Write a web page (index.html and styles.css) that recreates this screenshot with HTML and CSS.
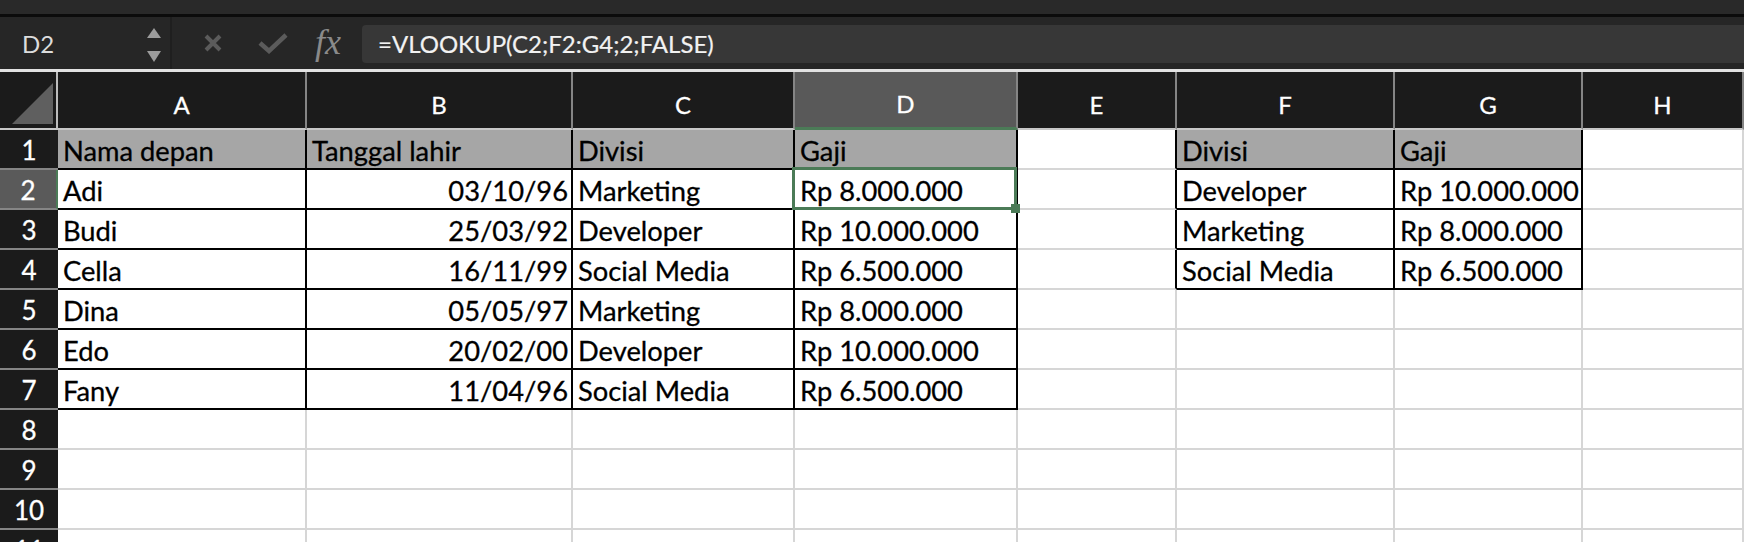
FILE: index.html
```html
<!DOCTYPE html>
<html lang="id">

<head>
  <meta charset="UTF-8">
  <title>Gaji Karyawan</title>
  <link rel="stylesheet" href="styles.css">
</head>

<body>
  <div class="topbar"></div>

  <div class="formula-bar">
    <div class="name-box">
      <span class="cell-ref">D2</span>
      <span class="stepper">
        <svg width="14" height="34" viewBox="0 0 14 34">
          <polygon points="7,0 14,10 0,10" fill="#9c9c9c" />
          <polygon points="0,23 14,23 7,34" fill="#9c9c9c" />
        </svg>
      </span>
    </div>
    <div class="fb-icons">
      <svg class="icon-x" width="20" height="20" viewBox="0 0 20 20">
        <path d="M3 3 L17 17 M17 3 L3 17" stroke="#5b5b5b" stroke-width="4" />
      </svg>
      <svg class="icon-ok" width="30" height="22" viewBox="0 0 30 22">
        <path d="M2 11 L11 19 L28 3" stroke="#5b5b5b" stroke-width="4.5" fill="none" />
      </svg>
      <span class="fx">fx</span>
    </div>
    <div class="formula-input">=VLOOKUP(C2;F2:G4;2;FALSE)</div>
  </div>

  <div class="sheet">
    <!-- column headers -->
    <div class="corner">
      <svg width="58" height="56" viewBox="0 0 58 56">
        <polygon points="12,52 53,11 53,52" fill="#5f5f5f" />
      </svg>
    </div>
    <div class="col-head">A</div>
    <div class="col-head">B</div>
    <div class="col-head">C</div>
    <div class="col-head active">D</div>
    <div class="col-head">E</div>
    <div class="col-head">F</div>
    <div class="col-head">G</div>
    <div class="col-head">H</div>

    <!-- row 1 -->
    <div class="row-head">1</div>
    <div class="cell data head">Nama depan</div>
    <div class="cell data head">Tanggal lahir</div>
    <div class="cell data head">Divisi</div>
    <div class="cell data head">Gaji</div>
    <div class="cell edge"></div>
    <div class="cell data head">Divisi</div>
    <div class="cell data head">Gaji</div>
    <div class="cell"></div>

    <!-- row 2 -->
    <div class="row-head active">2</div>
    <div class="cell data">Adi</div>
    <div class="cell data num">03/10/96</div>
    <div class="cell data">Marketing</div>
    <div class="cell data selected">Rp 8.000.000</div>
    <div class="cell edge"></div>
    <div class="cell data">Developer</div>
    <div class="cell data">Rp 10.000.000</div>
    <div class="cell"></div>

    <!-- row 3 -->
    <div class="row-head">3</div>
    <div class="cell data">Budi</div>
    <div class="cell data num">25/03/92</div>
    <div class="cell data">Developer</div>
    <div class="cell data">Rp 10.000.000</div>
    <div class="cell edge"></div>
    <div class="cell data">Marketing</div>
    <div class="cell data">Rp 8.000.000</div>
    <div class="cell"></div>

    <!-- row 4 -->
    <div class="row-head">4</div>
    <div class="cell data">Cella</div>
    <div class="cell data num">16/11/99</div>
    <div class="cell data">Social Media</div>
    <div class="cell data">Rp 6.500.000</div>
    <div class="cell edge"></div>
    <div class="cell data">Social Media</div>
    <div class="cell data">Rp 6.500.000</div>
    <div class="cell"></div>

    <!-- row 5 -->
    <div class="row-head">5</div>
    <div class="cell data">Dina</div>
    <div class="cell data num">05/05/97</div>
    <div class="cell data">Marketing</div>
    <div class="cell data">Rp 8.000.000</div>
    <div class="cell"></div>
    <div class="cell"></div>
    <div class="cell"></div>
    <div class="cell"></div>

    <!-- row 6 -->
    <div class="row-head">6</div>
    <div class="cell data">Edo</div>
    <div class="cell data num">20/02/00</div>
    <div class="cell data">Developer</div>
    <div class="cell data">Rp 10.000.000</div>
    <div class="cell"></div>
    <div class="cell"></div>
    <div class="cell"></div>
    <div class="cell"></div>

    <!-- row 7 -->
    <div class="row-head">7</div>
    <div class="cell data">Fany</div>
    <div class="cell data num">11/04/96</div>
    <div class="cell data">Social Media</div>
    <div class="cell data">Rp 6.500.000</div>
    <div class="cell"></div>
    <div class="cell"></div>
    <div class="cell"></div>
    <div class="cell"></div>

    <!-- empty rows -->
    <div class="row-head">8</div>
    <div class="cell"></div><div class="cell"></div><div class="cell"></div><div class="cell"></div>
    <div class="cell"></div><div class="cell"></div><div class="cell"></div><div class="cell"></div>

    <div class="row-head">9</div>
    <div class="cell"></div><div class="cell"></div><div class="cell"></div><div class="cell"></div>
    <div class="cell"></div><div class="cell"></div><div class="cell"></div><div class="cell"></div>

    <div class="row-head">10</div>
    <div class="cell"></div><div class="cell"></div><div class="cell"></div><div class="cell"></div>
    <div class="cell"></div><div class="cell"></div><div class="cell"></div><div class="cell"></div>

    <div class="row-head">11</div>
    <div class="cell"></div><div class="cell"></div><div class="cell"></div><div class="cell"></div>
    <div class="cell"></div><div class="cell"></div><div class="cell"></div><div class="cell"></div>
  </div>
</body>

</html>
```

FILE: styles.css
```css
* {
  box-sizing: border-box;
}

html,
body {
  height: 542px;
  overflow: hidden;
}

body {
  margin: 0;
  background-color: #fff;
  font-family: Lato, "Open Sans", sans-serif;
}

.topbar {
  height: 17px;
  background-color: #292929;
  border-bottom: 3px solid #0b0b0b;
}

.formula-bar {
  display: flex;
  height: 55px;
  background-color: #262626;
  border-bottom: 3px solid #e2e2e2;
}

.name-box {
  width: 172px;
  display: flex;
  align-items: center;
  padding-left: 22px;
  border-right: 2px solid #1f1f1f;
}

.cell-ref {
  flex: 1;
  color: #dcdcdc;
  font-size: 24px;
}

.stepper {
  display: flex;
  margin-right: 9px;
  margin-top: 4px;
}

.fb-icons {
  width: 190px;
  display: flex;
  align-items: center;
}

.icon-x {
  margin-left: 31px;
}

.icon-ok {
  margin-left: 35px;
}

.fx {
  margin-left: 27px;
  margin-top: -2px;
  color: #8a8a8a;
  font-family: "Liberation Serif", serif;
  font-style: italic;
  font-size: 36px;
}

.formula-input {
  flex: 1;
  height: 38px;
  margin-top: 8px;
  padding-left: 16px;
  line-height: 38px;
  background-color: #373737;
  border-radius: 4px 0 0 4px;
  color: #f2f2f2;
  font-size: 24px;
  -webkit-text-stroke: 0.2px #f2f2f2;
}

.sheet {
  display: grid;
  grid-template-columns: 58px 249px 266px 222px 223px 159px 218px 188px 1fr;
  grid-template-rows: 58px repeat(11, 40px);
}

.corner {
  background-color: #1b1b1b;
  border-right: 2px solid #bdbdbd;
  border-bottom: 2px solid #c8c8c8;
}

.corner svg {
  display: block;
}

.col-head {
  display: flex;
  align-items: center;
  justify-content: center;
  padding-top: 8px;
  background-color: #1b1b1b;
  border-right: 2px solid #858585;
  border-bottom: 2px solid #c8c8c8;
  color: #fff;
  font-size: 24px;
  -webkit-text-stroke: 0.3px #fff;
}

.col-head.active {
  background-color: #595959;
  border-bottom: 3px solid #4b7b57;
}

.row-head {
  display: flex;
  align-items: flex-end;
  justify-content: center;
  padding-bottom: 3px;
  background-color: #1b1b1b;
  border-bottom: 2px solid #858585;
  color: #fff;
  font-size: 26px;
  line-height: 30px;
  -webkit-text-stroke: 0.3px #fff;
}

.row-head.active {
  background-color: #5a5a5a;
  border-right: 2px solid #4b7b57;
}

.cell {
  display: flex;
  align-items: flex-end;
  padding: 0 3px 1px 5px;
  border-right: 2px solid #d6d6d6;
  border-bottom: 2px solid #d6d6d6;
  color: #000;
  font-size: 27.3px;
  line-height: 32px;
  white-space: nowrap;
  -webkit-text-stroke: 0.3px #000;
}

.cell.data,
.cell.edge {
  border-right-color: #000;
}

.cell.data {
  border-bottom-color: #000;
}

.cell.head {
  background-color: #a6a6a6;
}

.cell.num {
  justify-content: flex-end;
}

.cell.selected {
  position: relative;
}

.cell.selected::before {
  content: "";
  position: absolute;
  top: -3px;
  left: -3px;
  right: -1px;
  bottom: -2px;
  border: 3px solid #4b7b57;
}

.cell.selected::after {
  content: "";
  position: absolute;
  right: -4px;
  bottom: -5px;
  width: 9px;
  height: 9px;
  background-color: #4b7b57;
}
```
